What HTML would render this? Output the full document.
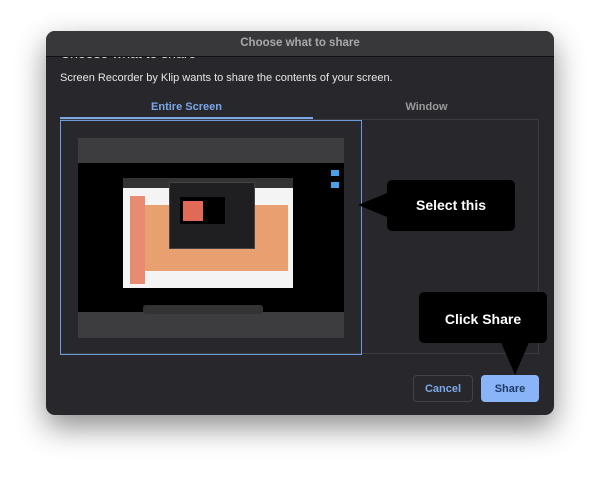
<!DOCTYPE html>
<html><head><style>
body{margin:0;width:600px;height:477px;background:#fff;position:relative;overflow:hidden;font-family:"Liberation Sans",sans-serif}
.win{position:absolute;left:46px;top:31px;width:508px;height:384px;background:#28282c;border-radius:9px;box-shadow:0 12px 30px rgba(0,0,0,.45);overflow:hidden}
.tb{position:absolute;left:0;top:0;width:100%;height:25px;background:#38383b;border-bottom:1px solid #111;color:#a9a9ab;font-weight:bold;font-size:11.5px;text-align:center;line-height:25px}
.a{position:absolute}
</style></head><body>
<div class="win">
<div class="a" style="left:14px;top:14px;font-size:14px;color:#ddd">Choose what to share</div>
<div class="tb">Choose what to share</div>
<div class="a" style="left:14px;top:41px;font-size:11px;color:#e6e6e6">Screen Recorder by Klip wants to share the contents of your screen.</div>
<div class="a" style="left:14px;top:70px;width:253px;text-align:center;font-size:11px;font-weight:bold;color:#7aa7e8">Entire Screen</div>
<div class="a" style="left:267px;top:70px;width:227px;text-align:center;font-size:11px;font-weight:bold;color:#9a9a9c">Window</div>
<div class="a" style="left:14px;top:86px;width:253px;height:2px;background:#7aa7e8"></div>
<div class="a" style="left:14px;top:88px;width:479px;height:235px;border:1px solid #3c3c40;box-sizing:border-box"></div>
<div class="a" style="left:14px;top:89px;width:302px;height:235px;border:1px solid #6d9be0;box-sizing:border-box"></div>
<div class="a" style="left:32px;top:107px;width:266px;height:200px;background:#3d3d3f"></div>
<div class="a" style="left:32px;top:132px;width:266px;height:149px;background:#000"></div>
<div class="a" style="left:77px;top:147px;width:170px;height:110px;background:#f4f4f4"></div>
<div class="a" style="left:77px;top:147px;width:170px;height:10px;background:#333"></div>
<div class="a" style="left:94px;top:174px;width:148px;height:66px;background:#e9a070"></div>
<div class="a" style="left:84px;top:165px;width:15px;height:88px;background:#e98a72"></div>
<div class="a" style="left:123px;top:151px;width:84px;height:65px;background:#1f1f22;border:1px solid #444"></div>
<div class="a" style="left:134px;top:166px;width:45px;height:27px;background:#000"></div>
<div class="a" style="left:137px;top:170px;width:20px;height:20px;background:#e06a55"></div>
<div class="a" style="left:97px;top:274px;width:120px;height:9px;background:#333;border-radius:3px"></div>
<div class="a" style="left:285px;top:139px;width:8px;height:6px;background:#4aa0e8"></div>
<div class="a" style="left:285px;top:151px;width:8px;height:6px;background:#4aa0e8"></div>
<div class="a" style="left:367px;top:344px;width:60px;height:27px;border:1px solid #444;border-radius:4px;box-sizing:border-box;color:#7aa7e8;font-size:11px;font-weight:bold;text-align:center;line-height:27px">Cancel</div>
<div class="a" style="left:435px;top:344px;width:58px;height:27px;background:#8ab4f8;border-radius:4px;color:#1e3a66;font-size:11px;font-weight:bold;text-align:center;line-height:28px">Share</div>
</div>
<svg class="a" style="left:0;top:0" width="600" height="477">
<polygon points="358,205 392,191 392,219" fill="#000"/>
<polygon points="500,340 530,340 515,375" fill="#000"/>
</svg>
<div class="a" style="left:387px;top:180px;width:128px;height:51px;background:#000;border-radius:5px;color:#fff;font-size:14px;font-weight:bold;text-align:center;line-height:51px">Select this</div>
<div class="a" style="left:419px;top:292px;width:128px;height:51px;background:#000;border-radius:5px;color:#fff;font-size:14px;font-weight:bold;text-align:center;line-height:55px">Click Share</div>
</body></html>
